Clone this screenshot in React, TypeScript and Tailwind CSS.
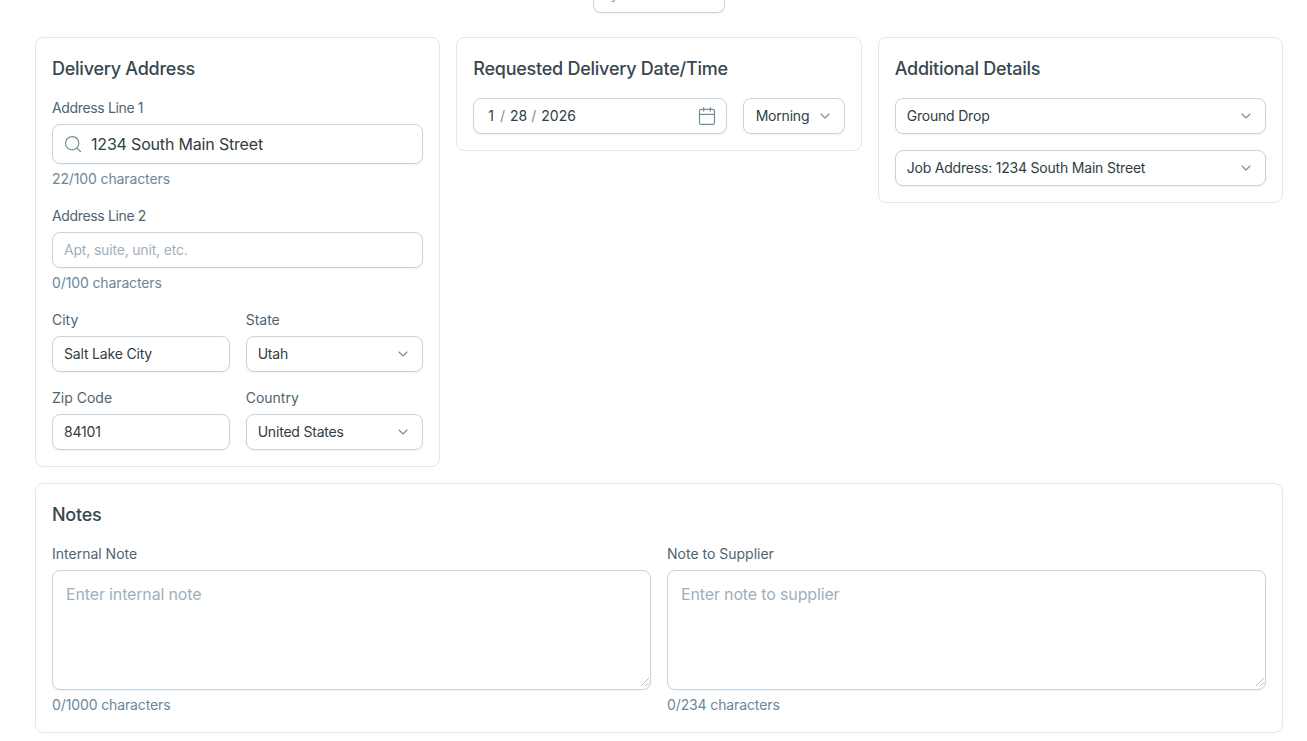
import { Calendar, ChevronDown, Search } from "lucide-react";

const field = "h-9 w-full rounded-lg border border-[#c9d3db] bg-white px-[11px] pb-[2px] text-sm tracking-[-0.18px] text-[#2f3d45] shadow-[0_1px_2px_rgba(0,0,0,0.05)] outline-none placeholder:text-[#9fb0bb]";
const card = "rounded-lg border border-[#e2e8ec] bg-white p-4";
const title = "mb-4 h-7 pt-px text-lg leading-7 font-medium tracking-[-0.25px] text-[#37474f]";
const labelCls = "mb-2 block h-[18px] pt-px text-sm leading-[18px] text-[#4f6472]";
const help = "mt-[5px] h-[21px] text-sm leading-5 tracking-[-0.12px] text-[#6c8799]";

function Select({ value, className = "pl-[11px]" }: { value: string; className?: string }) {
  return (
    <div className={`flex h-9 items-center justify-between rounded-lg border border-[#c9d3db] bg-white pr-[11px] pb-px text-sm tracking-[-0.2px] text-[#2f3d45] shadow-[0_1px_2px_rgba(0,0,0,0.05)] ${className}`}>
      <span>{value}</span>
      <ChevronDown size={16} strokeWidth={1.75} className="text-[#78909c]" />
    </div>
  );
}

function Note({ label, placeholder, count }: { label: string; placeholder: string; count: string }) {
  return (
    <div>
      <label className={labelCls}>{label}</label>
      <div className="relative">
        <textarea placeholder={placeholder} className="block h-[120px] w-full resize-none rounded-lg border border-[#c9d3db] bg-white px-[13px] pt-[11px] pb-[10px] text-base leading-6 tracking-[-0.15px] text-[#2f3d45] shadow-[0_1px_2px_rgba(0,0,0,0.05)] outline-none placeholder:text-[#9fb0bb]" />
        <svg width="10" height="10" viewBox="0 0 10 10" className="absolute right-[1px] bottom-[3px] text-[#b4bec5]" stroke="currentColor" strokeWidth="1" fill="none">
          <path d="M1 9 9 1" />
          <path d="M5.5 9 9 5.5" />
        </svg>
      </div>
      <p className={help}>{count}</p>
    </div>
  );
}

export default function App() {
  return (
    <div className="h-[741px] overflow-hidden bg-white pr-6 pl-[35px] font-['Inter',sans-serif]">
      <div className="flex h-[37px] justify-center">
        <div className="flex h-[13px] w-[132px] items-start rounded-b-lg border-x border-b border-[#c9d3db] pl-[17px] shadow-[0_1px_2px_rgba(0,0,0,0.05)]">
          <div className="h-[2px] w-[4px] rounded-b-full border-r border-b border-[#78909c]" />
        </div>
      </div>
      <div className="grid grid-cols-3 items-start gap-4">
        <section className={card}>
          <h2 className={title}>Delivery Address</h2>
          <label className={`${labelCls} tracking-[-0.35px]`}>Address Line 1</label>
          <div className="flex h-10 items-center gap-2 rounded-lg border border-[#c9d3db] bg-white pr-3 pl-[10px] shadow-[0_1px_2px_rgba(0,0,0,0.05)]">
            <Search size={20} strokeWidth={1.5} className="shrink-0 text-[#78909c]" />
            <input readOnly value="1234 South Main Street" className="w-full bg-transparent text-base tracking-[-0.18px] text-[#2f3d45] outline-none" />
          </div>
          <p className={help}>22/100 characters</p>
          <label className={`${labelCls} mt-4 tracking-[-0.35px]`}>Address Line 2</label>
          <input placeholder="Apt, suite, unit, etc." className={field} />
          <p className={help}>0/100 characters</p>
          <div className="mt-4 grid grid-cols-2 gap-x-4 gap-y-4">
            <div>
              <label className={labelCls}>City</label>
              <input readOnly value="Salt Lake City" className={field} />
            </div>
            <div>
              <label className={labelCls}>State</label>
              <Select value="Utah" />
            </div>
            <div>
              <label className={labelCls}>Zip Code</label>
              <input readOnly value="84101" className={field} />
            </div>
            <div>
              <label className={labelCls}>Country</label>
              <Select value="United States" />
            </div>
          </div>
        </section>

        <section className={card}>
          <h2 className={title}>Requested Delivery Date/Time</h2>
          <div className="flex gap-4">
            <div className="flex h-9 flex-1 items-center justify-between rounded-lg border border-[#c9d3db] bg-white pr-[9px] pb-px pl-[14px] text-sm text-[#2f3d45] shadow-[0_1px_2px_rgba(0,0,0,0.05)]">
              <span>
                1<span className="mr-[5px] ml-[6px] text-[#78909c]">/</span>28<span className="mr-[5px] ml-[4px] text-[#78909c]">/</span>2026
              </span>
              <Calendar size={20} strokeWidth={1.5} className="mt-px text-[#78909c]" />
            </div>
            <Select value="Morning" className="w-[102px] pl-3" />
          </div>
        </section>

        <section className={card}>
          <h2 className={title}>Additional Details</h2>
          <div className="flex flex-col gap-4">
            <Select value="Ground Drop" />
            <Select value="Job Address: 1234 South Main Street" />
          </div>
        </section>
      </div>

      <section className={`${card} mt-4`}>
        <h2 className={title}>Notes</h2>
        <div className="grid grid-cols-2 gap-4">
          <Note label="Internal Note" placeholder="Enter internal note" count="0/1000 characters" />
          <Note label="Note to Supplier" placeholder="Enter note to supplier" count="0/234 characters" />
        </div>
      </section>
    </div>
  );
}
